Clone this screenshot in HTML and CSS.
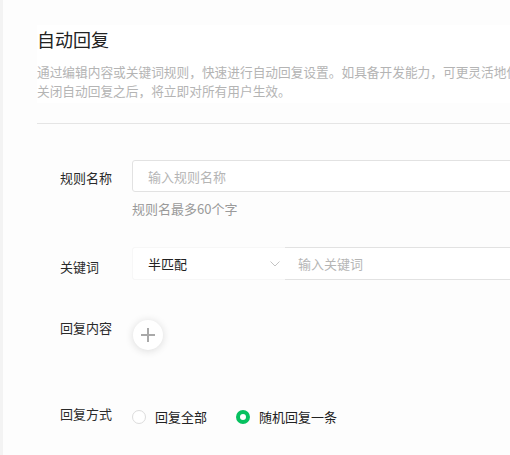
FILE: index.html
```html
<!DOCTYPE html>
<html lang="zh">
<head>
<meta charset="utf-8">
<link rel="stylesheet" href="styles.css">
</head>
<body>
<div class="page">
  <div class="intro">
    <h1 class="title">自动回复</h1>
    <p class="desc">通过编辑内容或关键词规则，快速进行自动回复设置。如具备开发能力，可更灵活地使用该功能。<br>关闭自动回复之后，将立即对所有用户生效。</p>
  </div>
  <div class="divider"></div>
  <div class="form">
    <div class="row row-name">
      <div class="label">规则名称</div>
      <div class="control">
        <div class="input"><span class="placeholder">输入规则名称</span></div>
        <div class="hint">规则名最多60个字</div>
      </div>
    </div>
    <div class="row row-key">
      <div class="label">关键词</div>
      <div class="control group">
        <div class="select">
          <span class="select-text">半匹配</span>
          <svg class="chevron" width="10" height="6" viewBox="0 0 10 6"><path d="M0.5 0.5 L5 5 L9.5 0.5" fill="none" stroke="#c4c4c4" stroke-width="1"/></svg>
        </div>
        <div class="key-input"><span class="placeholder">输入关键词</span></div>
      </div>
    </div>
    <div class="row row-content">
      <div class="label">回复内容</div>
      <div class="control">
        <div class="add-btn">
          <svg width="16" height="16" viewBox="0 0 16 16"><path d="M8 1 V15 M1 8 H15" stroke="#a9a9a9" stroke-width="2" fill="none"/></svg>
        </div>
      </div>
    </div>
    <div class="row row-mode">
      <div class="label">回复方式</div>
      <div class="control radios">
        <label class="radio"><span class="dot"></span><span>回复全部</span></label>
        <label class="radio checked"><span class="dot"></span><span>随机回复一条</span></label>
      </div>
    </div>
  </div>
</div>
</body>
</html>
```

FILE: styles.css
```css
html, body {
  margin: 0;
  padding: 0;
}
body {
  width: 510px;
  height: 455px;
  overflow: hidden;
  background: #fdfdfd;
  font-family: "Noto Sans CJK SC", "Noto Sans", sans-serif;
  color: #353535;
}
.page {
  border-left: 3px solid #f3f3f3;
  height: 455px;
  box-sizing: border-box;
  padding-top: 25px;
}
.intro {
  margin-left: 34px;
  background: #fff;
  height: 78px;
  padding-top: 2px;
  box-sizing: border-box;
  white-space: nowrap;
  overflow: hidden;
}
.title {
  margin: 0;
  font-size: 18px;
  line-height: 24px;
  font-weight: normal;
  color: #222;
}
.desc {
  margin: 11px 0 0;
  font-size: 12.7px;
  line-height: 19px;
  color: #b4b4b4;
}
.divider {
  margin: 20px 0 0 34px;
  height: 1px;
  background: #e5e5e5;
}
.form {
  padding-left: 57px;
  padding-top: 36px;
}
.row {
  display: flex;
  align-items: flex-start;
}
.label {
  width: 72px;
  flex: none;
  font-size: 13px;
  line-height: 20px;
  color: #2a2a2a;
}
.row-name .label { padding-top: 8px; }
.row-key { margin-top: 28px; }
.row-key .label { padding-top: 10px; }
.row-content { margin-top: 38px; }
.row-mode { margin-top: 54px; }
.control {
  flex: none;
}
.input {
  width: 420px;
  height: 32px;
  box-sizing: border-box;
  border: 1px solid #e2e2e2;
  border-radius: 3px;
  background: #fff;
  padding-left: 15px;
  display: flex;
  align-items: center;
  font-size: 13px;
}
.placeholder {
  color: #b5b5b5;
  font-size: 13px;
}
.hint {
  margin-top: 7px;
  font-size: 13px;
  line-height: 20px;
  color: #9a9a9a;
}
.group {
  display: flex;
}
.select {
  width: 153px;
  height: 33px;
  box-sizing: border-box;
  border: 1px solid #f7f7f7;
  border-right: none;
  border-radius: 3px 0 0 3px;
  background: #fff;
  display: flex;
  align-items: center;
  padding-left: 15px;
  padding-right: 5px;
}
.select-text {
  flex: 1;
  font-size: 13px;
  color: #222;
}
.key-input {
  width: 260px;
  height: 33px;
  box-sizing: border-box;
  border-top: 1px solid #e2e2e2;
  border-bottom: 1px solid #e2e2e2;
  background: #fff;
  padding-left: 13px;
  display: flex;
  align-items: center;
}
.add-btn {
  margin-top: 2px;
  margin-left: 1px;
  width: 30px;
  height: 30px;
  border-radius: 50%;
  background: #fff;
  box-shadow: 0 1px 8px rgba(0, 0, 0, 0.14);
  display: flex;
  align-items: center;
  justify-content: center;
}
.radios {
  display: flex;
  align-items: center;
  height: 26px;
}
.radio {
  display: flex;
  align-items: center;
  font-size: 13px;
  line-height: 20px;
  color: #222;
  margin-right: 29px;
}
.dot {
  width: 14px;
  height: 14px;
  box-sizing: border-box;
  border: 1px solid #dcdcdc;
  border-radius: 50%;
  background: #fff;
  margin-right: 9px;
}
.radio.checked .dot {
  border: 4px solid #07c160;
  background: #fff;
}
```
